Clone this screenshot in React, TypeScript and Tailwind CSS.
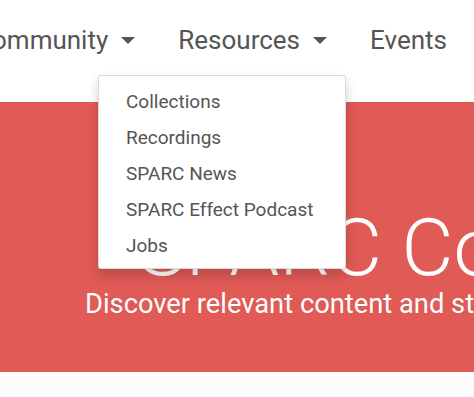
import { ReactNode } from 'react'

const MENU = ['Collections', 'Recordings', 'SPARC News', 'SPARC Effect Podcast', 'Jobs']

function Caret() {
  return (
    <svg width="14" height="7" viewBox="0 0 14 7" className="ml-[13px] fill-current">
      <path d="M0 0h14L7 7z" />
    </svg>
  )
}

function NavItem({ children, caret }: { children: ReactNode; caret?: boolean }) {
  return (
    <div className="flex items-center shrink-0 whitespace-nowrap">
      <span>{children}</span>
      {caret && <Caret />}
    </div>
  )
}

export default function App() {
  return (
    <div className="relative w-[474px] h-[397px] overflow-hidden bg-white font-['Roboto',sans-serif]">
      {/* Top nav */}
      <nav className="h-[102px] flex items-start justify-end gap-[43px] pr-[27px] pt-[27px] text-[26px] leading-none text-[#555]">
        <NavItem caret>Community</NavItem>
        <NavItem caret>Resources</NavItem>
        <NavItem>Events</NavItem>
      </nav>

      {/* Hero */}
      <section className="h-[270px] bg-[#e05a56] text-white whitespace-nowrap pt-[106px]">
        <h1 className="pl-[138px] text-[80px] font-light leading-none">SPARC Collections</h1>
        <p className="pl-[85px] mt-[3px] text-[27.3px] leading-none">Discover relevant content and stay informed</p>
      </section>

      <div className="h-[25px] bg-[#fcfcfc]" />

      {/* Resources dropdown */}
      <ul className="absolute left-[98px] top-[75px] w-[248px] h-[194px] bg-white border border-black/15 rounded-[3px] shadow-[0_6px_12px_rgba(0,0,0,0.18)] pt-[8px] text-[19px] text-[#555]">
        {MENU.map(m => (
          <li key={m} className="h-[36px] leading-[36px] pl-[27px]">{m}</li>
        ))}
      </ul>
    </div>
  )
}
